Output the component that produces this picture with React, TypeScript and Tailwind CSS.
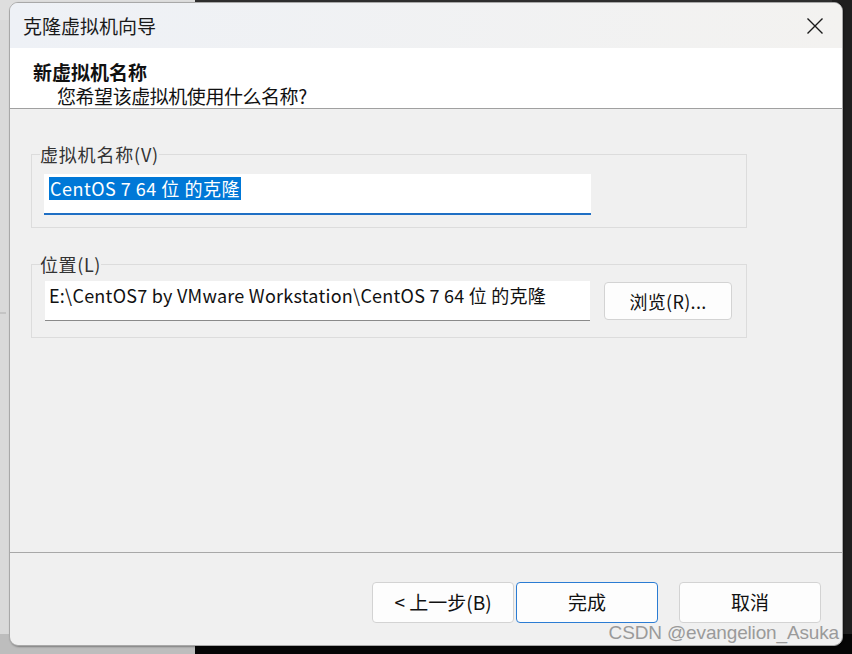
import React from "react";

const font = { fontFamily: '"Noto Sans CJK SC", "Noto Sans", sans-serif' };

export default function App() {
  return (
    <div className="relative w-[852px] h-[654px] overflow-hidden bg-[#d9d9d9]" style={font}>
      {/* desktop backdrop */}
      <div className="absolute left-[195px] top-0 right-0 h-[20px] bg-[#2e2e2e]" />
      <div className="absolute right-0 top-0 w-[20px] bottom-0 bg-[#1f1f1f]" />
      <div className="absolute left-0 top-0 w-[195px] h-[20px] bg-[#dedede]" />
      <div className="absolute left-0 bottom-0 w-[195px] h-[20px] bg-[#bdbdbd]" />
      <div className="absolute left-[195px] bottom-0 right-0 h-[20px] bg-[#050505]" />
      <div className="absolute left-0 top-[312px] w-[6px] h-[2px] bg-[#c4c4c4]" />

      {/* window */}
      <div className="absolute left-[9px] top-[2px] w-[834px] h-[644px] rounded-[9px] border border-[#a8a8a8] bg-[#f0f0f0] overflow-hidden flex flex-col shadow-[1px_1px_2px_rgba(0,0,0,0.35)]">
        {/* title bar */}
        <div className="h-[45px] shrink-0 flex items-center justify-between pl-[13px] pr-[16px] bg-gradient-to-r from-[#eef1f6] to-[#f3f2f0]">
          <span className="text-[19px] text-[#1a1a1a] leading-none">克隆虚拟机向导</span>
          <svg width="18" height="18" viewBox="0 0 18 18" className="mr-[2px]">
            <path d="M1.5 1.5 L16.5 16.5 M16.5 1.5 L1.5 16.5" stroke="#1a1a1a" strokeWidth="1.4" fill="none" />
          </svg>
        </div>

        {/* header */}
        <div className="h-[61px] shrink-0 bg-white border-b border-[#a0a0a0] pl-[23px] pt-[11px]">
          <div className="text-[19px] font-bold text-[#111] leading-[25px]">新虚拟机名称</div>
          <div className="text-[19px] text-[#111] leading-[24px] pl-[24px] tracking-[-0.45px]">您希望该虚拟机使用什么名称?</div>
        </div>

        {/* body */}
        <div className="flex-1 flex flex-col pl-[21px] pt-[45px] border-b border-[#a8a8a8]">
          {/* group 1 */}
          <div className="relative w-[716px] h-[74px] border border-[#dcdcdc]">
            <span className="absolute left-[8px] top-[-12px] bg-[#f0f0f0] text-[18px] leading-[22px] text-[#333] tracking-[0.8px]">虚拟机名称(V)</span>
            <div className="absolute left-[12px] top-[19px] w-[547px] h-[41px] bg-white border-b-2 border-[#1f6fc4] flex items-start pt-[3px] pl-[5px]">
              <span className="bg-[#0078d7] text-white text-[18px] leading-[23px] px-[1px] tracking-[0.5px]">CentOS 7 64 位 的克隆</span>
            </div>
          </div>

          {/* group 2 */}
          <div className="relative mt-[36px] w-[716px] h-[74px] border border-[#dcdcdc]">
            <span className="absolute left-[8px] top-[-12px] bg-[#f0f0f0] text-[18px] leading-[22px] text-[#333] tracking-[0.6px]">位置(L)</span>
            <div className="absolute left-[13px] top-[16px] w-[545px] h-[40px] bg-white border-b border-[#8a8a8a] flex items-start pt-[3px] pl-[4px]">
              <span className="text-[18px] leading-[23px] text-[#111] tracking-[0.25px]">E:\CentOS7 by VMware Workstation\CentOS 7 64 位 的克隆</span>
            </div>
            <div className="absolute left-[572px] top-[17px] w-[128px] h-[38px] bg-[#fdfdfd] border border-[#d3d3d3] rounded-[4px] flex items-center justify-center text-[18px] text-[#111] tracking-[0.3px]">
              浏览(R)...
            </div>
          </div>
        </div>

        {/* footer */}
        <div className="h-[92px] shrink-0 relative flex items-start justify-end pr-[21px] pt-[29px]">
          <div className="w-[142px] h-[41px] bg-[#fdfdfd] border border-[#d3d3d3] rounded-[4px] flex items-center justify-center text-[19px] text-[#111]">
            &lt; 上一步(B)
          </div>
          <div className="ml-[2px] w-[142px] h-[41px] bg-[#fdfdfd] border border-[#2b7cd3] rounded-[4px] flex items-center justify-center text-[19px] text-[#111]">
            完成
          </div>
          <div className="ml-[21px] w-[142px] h-[41px] bg-[#fdfdfd] border border-[#d3d3d3] rounded-[4px] flex items-center justify-center text-[19px] text-[#111]">
            取消
          </div>
          <span className="absolute right-[3px] bottom-[1px] text-[19px] leading-[22px] text-[#9a9a9a] tracking-[-0.15px]" style={{ fontFamily: '"Liberation Sans", sans-serif' }}>
            CSDN @evangelion_Asuka
          </span>
        </div>
      </div>
    </div>
  );
}
